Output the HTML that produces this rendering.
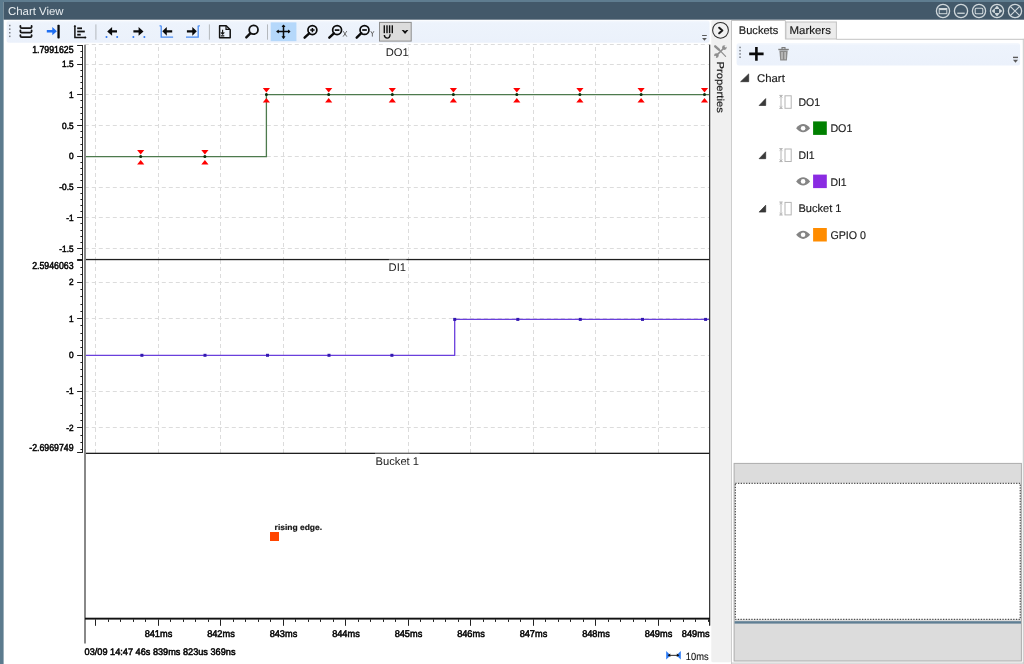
<!DOCTYPE html><html><head><meta charset="utf-8"><style>html,body{margin:0;padding:0;background:#fff;overflow:hidden}svg{display:block;will-change:transform}text{font-family:"Liberation Sans", sans-serif;text-rendering:geometricPrecision}</style></head><body>
<svg width="1024" height="664" viewBox="0 0 1024 664">
<rect x="0" y="0" width="1024" height="664" fill="#fff"/>
<rect x="0" y="0" width="1024" height="2" fill="#5f7d90"/>
<rect x="0" y="0" width="3.6" height="664" fill="#5c7b8e"/>
<defs><linearGradient id="tbg" x1="0" y1="0" x2="0" y2="1"><stop offset="0" stop-color="#f5f8fd"/><stop offset="0.12" stop-color="#edf3fc"/><stop offset="1" stop-color="#ebf1fb"/></linearGradient></defs>
<rect x="3.6" y="2" width="1020.4" height="17.7" fill="#43596a"/>
<text x="8" y="15.2" font-size="11.4" fill="#e8edf0">Chart View</text>
<circle cx="943" cy="11" r="6.6" fill="none" stroke="#cfd7db" stroke-width="1.3"/>
<circle cx="961" cy="11" r="6.6" fill="none" stroke="#cfd7db" stroke-width="1.3"/>
<circle cx="979" cy="11" r="6.6" fill="none" stroke="#cfd7db" stroke-width="1.3"/>
<circle cx="997" cy="11" r="6.6" fill="none" stroke="#cfd7db" stroke-width="1.3"/>
<circle cx="1015" cy="11" r="6.6" fill="none" stroke="#cfd7db" stroke-width="1.3"/>
<g fill="#cfd7db" stroke="#cfd7db">
<rect x="939.2" y="8.5" width="7.6" height="5.2" fill="none" stroke-width="1"/><rect x="939.2" y="8.5" width="7.6" height="1.6" stroke="none"/>
<rect x="957.3" y="12.6" width="7.4" height="1.3" stroke="none"/>
<rect x="975.2" y="8.2" width="7.6" height="5.6" rx="1" fill="none" stroke-width="1.1"/>
<path d="M997 5.6 L999.8 8.9 L994.2 8.9Z M997 16.4 L999.8 13.1 L994.2 13.1Z M991.6 11 L994.9 8.2 L994.9 13.8Z M1002.4 11 L999.1 8.2 L999.1 13.8Z" stroke="none"/>
<path d="M1010.3 6.3 L1019.7 15.7 M1019.7 6.3 L1010.3 15.7" fill="none" stroke-width="1.2"/>
</g>
<rect x="6.6" y="20.4" width="703" height="22.4" rx="2.5" fill="url(#tbg)"/>
<rect x="9" y="24.8" width="1.5" height="1.5" fill="#7a7f86"/>
<rect x="9" y="28.400000000000002" width="1.5" height="1.5" fill="#7a7f86"/>
<rect x="9" y="32.0" width="1.5" height="1.5" fill="#7a7f86"/>
<rect x="9" y="35.599999999999994" width="1.5" height="1.5" fill="#7a7f86"/>
<path d="M20.4 25.9 L20.4 26.90 Q20.4 28.1 21.8 28.1 L30.2 28.1 Q31.6 28.1 31.6 26.90 L31.6 25.9" fill="none" stroke="#151515" stroke-width="1.8" stroke-linecap="round"/>
<path d="M20.4 30.5 L20.4 31.40 Q20.4 32.6 21.8 32.6 L30.2 32.6 Q31.6 32.6 31.6 31.40 L31.6 30.5" fill="none" stroke="#151515" stroke-width="1.8" stroke-linecap="round"/>
<path d="M20.4 35.2 L20.4 36.00 Q20.4 37.2 21.8 37.2 L30.2 37.2 Q31.6 37.2 31.6 36.00 L31.6 35.2" fill="none" stroke="#151515" stroke-width="1.8" stroke-linecap="round"/>
<path d="M46.8 30 L52.3 30 L52.3 27.1 L56.9 31.2 L52.3 35.3 L52.3 32.4 L46.8 32.4Z" fill="#1f6ff2"/>
<rect x="57.4" y="24.7" width="2.3" height="13.9" rx="0.8" fill="#0a0a0a"/>
<path d="M74.9 25.6 L74.9 37.5 L86 37.5" fill="none" stroke="#151515" stroke-width="1.5"/>
<path d="M73.6 26.8 L74.9 24.9 L76.2 26.8Z M84.8 36.2 L86.7 37.5 L84.8 38.8Z" fill="#151515"/>
<rect x="77.2" y="27.4" width="4.8" height="1.8" fill="#111"/><rect x="77.2" y="30.6" width="7.6" height="1.8" fill="#111"/><rect x="77.2" y="33.8" width="3.5" height="1.8" fill="#111"/>
<rect x="95.4" y="24.4" width="1" height="15.3" fill="#b4b8bd"/>
<path d="M107.2 31.4 L112.1 26.9 L112.1 30.3 L117 30.3 L117 32.6 L112.1 32.6 L112.1 35.8Z" fill="#0a0a0a"/>
<circle cx="106.5" cy="37.1" r="1" fill="#2f78f0"/><circle cx="117.2" cy="37.1" r="1" fill="#2f78f0"/>
<path d="M143.5 31.4 L138.6 26.9 L138.6 30.3 L133.4 30.3 L133.4 32.6 L138.6 32.6 L138.6 35.8Z" fill="#0a0a0a"/>
<circle cx="133.4" cy="37.1" r="1" fill="#2f78f0"/><circle cx="144.4" cy="37.1" r="1" fill="#2f78f0"/>
<path d="M159.6 25.6 L161.2 26.2 L161.2 37.2 L173.1 37.2" fill="none" stroke="#4a8cf2" stroke-width="1.3"/>
<path d="M162.3 31.3 L166.8 27 L166.8 30.2 L172.2 30.2 L172.2 32.5 L166.8 32.5 L166.8 35.7Z" fill="#0a0a0a"/>
<path d="M199.8 25.6 L198.2 26.2 L198.2 37.2 L186 37.2" fill="none" stroke="#4a8cf2" stroke-width="1.3"/>
<path d="M196.8 31.3 L192.3 27 L192.3 30.2 L186.9 30.2 L186.9 32.5 L192.3 32.5 L192.3 35.7Z" fill="#0a0a0a"/>
<rect x="208.9" y="24.4" width="1" height="15.3" fill="#b4b8bd"/>
<path d="M219.6 25.7 L226.2 25.7 L230.2 29.7 L230.2 37.7 L219.6 37.7Z" fill="none" stroke="#111" stroke-width="1.5" stroke-linejoin="round"/>
<path d="M226 25.9 L226 29.3 L229.9 29.3" fill="none" stroke="#111" stroke-width="1.2"/>
<path d="M222.6 29.8 L222.6 33.6 M220.9 32.4 L222.6 34.3 L224.3 32.4 M220.9 35.9 L224.3 35.9" fill="none" stroke="#111" stroke-width="1.1"/>
<circle cx="253.6" cy="29.8" r="4.4" fill="none" stroke="#111" stroke-width="1.8"/>
<path d="M250.3 33.3 L246.3 37.4" stroke="#111" stroke-width="2.4" stroke-linecap="round"/>
<rect x="267" y="24.4" width="1" height="15.3" fill="#b4b8bd"/>
<rect x="270.7" y="22.35" width="25.7" height="18.8" fill="#b5d8fb"/>
<path d="M283.5 25 L283.5 38.3 M276.8 31.6 L290 31.6" stroke="#0a0a0a" stroke-width="1.5"/>
<path d="M283.5 24.4 L285.5 27 L281.5 27Z M283.5 38.9 L285.5 36.3 L281.5 36.3Z M276.2 31.6 L278.8 29.6 L278.8 33.6Z M290.6 31.6 L288 29.6 L288 33.6Z" fill="#0a0a0a"/>
<circle cx="312.4" cy="30.1" r="4.45" fill="none" stroke="#0a0a0a" stroke-width="1.7"/><path d="M309.2 33.300000000000004 L304.6 37.7" stroke="#0a0a0a" stroke-width="2.4" stroke-linecap="round"/>
<path d="M310.2 30.1 L314.6 30.1 M312.4 27.9 L312.4 32.3" stroke="#0a0a0a" stroke-width="1.5"/>
<circle cx="337.1" cy="30.1" r="4.45" fill="none" stroke="#0a0a0a" stroke-width="1.7"/><path d="M333.90000000000003 33.300000000000004 L329.3 37.7" stroke="#0a0a0a" stroke-width="2.4" stroke-linecap="round"/>
<path d="M334.8 30.1 L339.4 30.1" stroke="#0a0a0a" stroke-width="1.7"/>
<path d="M343.1 31.1 L346.8 36.6 M346.8 31.1 L343.1 36.6" stroke="#5a5a5a" stroke-width="0.9"/>
<circle cx="364.5" cy="30.0" r="4.45" fill="none" stroke="#0a0a0a" stroke-width="1.7"/><path d="M361.3 33.2 L356.7 37.7" stroke="#0a0a0a" stroke-width="2.4" stroke-linecap="round"/>
<path d="M362.2 30 L366.8 30" stroke="#0a0a0a" stroke-width="1.7"/>
<path d="M370.8 31.2 L372.35 33.8 L373.9 31.2 M372.35 33.8 L372.35 36.6" fill="none" stroke="#5a5a5a" stroke-width="0.9"/>
<rect x="379.5" y="22.4" width="31.7" height="18.7" fill="#dcdcdc" stroke="#8e8e8e" stroke-width="1"/>
<rect x="383.6" y="25.3" width="1.4" height="7.9" fill="#111"/>
<rect x="386.3" y="25.3" width="1.4" height="7.9" fill="#111"/>
<rect x="388.90000000000003" y="25.3" width="1.4" height="7.9" fill="#111"/>
<rect x="391.6" y="25.3" width="1.4" height="7.9" fill="#111"/>
<path d="M384.3 35.0 Q384.6 38.1 387.2 38.1 Q389.9 38.1 390.1 34.2" fill="none" stroke="#111" stroke-width="1.4"/>
<path d="M401.7 29.9 L403.5 29.9 L405.05 31.1 L406.6 29.9 L408.4 29.9 L405.05 33.9Z" fill="#111"/>
<rect x="702.1" y="35" width="4.7" height="1" fill="#5a5a5a"/><path d="M702.1 38.1 L706.8 38.1 L704.45 40.8Z" fill="#5a5a5a"/>
<g>
<line x1="95.5" y1="47" x2="95.5" y2="259" stroke="#dcdcdc" stroke-width="1" stroke-dasharray="4 3"/>
<line x1="95.5" y1="260" x2="95.5" y2="453" stroke="#dcdcdc" stroke-width="1" stroke-dasharray="4 3"/>
<line x1="158.5" y1="47" x2="158.5" y2="259" stroke="#dcdcdc" stroke-width="1" stroke-dasharray="4 3"/>
<line x1="158.5" y1="260" x2="158.5" y2="453" stroke="#dcdcdc" stroke-width="1" stroke-dasharray="4 3"/>
<line x1="220.5" y1="47" x2="220.5" y2="259" stroke="#dcdcdc" stroke-width="1" stroke-dasharray="4 3"/>
<line x1="220.5" y1="260" x2="220.5" y2="453" stroke="#dcdcdc" stroke-width="1" stroke-dasharray="4 3"/>
<line x1="283.5" y1="47" x2="283.5" y2="259" stroke="#dcdcdc" stroke-width="1" stroke-dasharray="4 3"/>
<line x1="283.5" y1="260" x2="283.5" y2="453" stroke="#dcdcdc" stroke-width="1" stroke-dasharray="4 3"/>
<line x1="345.5" y1="47" x2="345.5" y2="259" stroke="#dcdcdc" stroke-width="1" stroke-dasharray="4 3"/>
<line x1="345.5" y1="260" x2="345.5" y2="453" stroke="#dcdcdc" stroke-width="1" stroke-dasharray="4 3"/>
<line x1="408.5" y1="47" x2="408.5" y2="259" stroke="#dcdcdc" stroke-width="1" stroke-dasharray="4 3"/>
<line x1="408.5" y1="260" x2="408.5" y2="453" stroke="#dcdcdc" stroke-width="1" stroke-dasharray="4 3"/>
<line x1="470.5" y1="47" x2="470.5" y2="259" stroke="#dcdcdc" stroke-width="1" stroke-dasharray="4 3"/>
<line x1="470.5" y1="260" x2="470.5" y2="453" stroke="#dcdcdc" stroke-width="1" stroke-dasharray="4 3"/>
<line x1="533.5" y1="47" x2="533.5" y2="259" stroke="#dcdcdc" stroke-width="1" stroke-dasharray="4 3"/>
<line x1="533.5" y1="260" x2="533.5" y2="453" stroke="#dcdcdc" stroke-width="1" stroke-dasharray="4 3"/>
<line x1="595.5" y1="47" x2="595.5" y2="259" stroke="#dcdcdc" stroke-width="1" stroke-dasharray="4 3"/>
<line x1="595.5" y1="260" x2="595.5" y2="453" stroke="#dcdcdc" stroke-width="1" stroke-dasharray="4 3"/>
<line x1="658.5" y1="47" x2="658.5" y2="259" stroke="#dcdcdc" stroke-width="1" stroke-dasharray="4 3"/>
<line x1="658.5" y1="260" x2="658.5" y2="453" stroke="#dcdcdc" stroke-width="1" stroke-dasharray="4 3"/>
<line x1="84.8" y1="64.5" x2="709" y2="64.5" stroke="#dcdcdc" stroke-width="1" stroke-dasharray="4 3"/>
<line x1="84.8" y1="94.5" x2="709" y2="94.5" stroke="#dcdcdc" stroke-width="1" stroke-dasharray="4 3"/>
<line x1="84.8" y1="125.5" x2="709" y2="125.5" stroke="#dcdcdc" stroke-width="1" stroke-dasharray="4 3"/>
<line x1="84.8" y1="156.5" x2="709" y2="156.5" stroke="#dcdcdc" stroke-width="1" stroke-dasharray="4 3"/>
<line x1="84.8" y1="187.5" x2="709" y2="187.5" stroke="#dcdcdc" stroke-width="1" stroke-dasharray="4 3"/>
<line x1="84.8" y1="217.5" x2="709" y2="217.5" stroke="#dcdcdc" stroke-width="1" stroke-dasharray="4 3"/>
<line x1="84.8" y1="248.5" x2="709" y2="248.5" stroke="#dcdcdc" stroke-width="1" stroke-dasharray="4 3"/>
<line x1="84.8" y1="282.5" x2="709" y2="282.5" stroke="#dcdcdc" stroke-width="1" stroke-dasharray="4 3"/>
<line x1="84.8" y1="318.5" x2="709" y2="318.5" stroke="#dcdcdc" stroke-width="1" stroke-dasharray="4 3"/>
<line x1="84.8" y1="355.5" x2="709" y2="355.5" stroke="#dcdcdc" stroke-width="1" stroke-dasharray="4 3"/>
<line x1="84.8" y1="391.5" x2="709" y2="391.5" stroke="#dcdcdc" stroke-width="1" stroke-dasharray="4 3"/>
<line x1="84.8" y1="427.5" x2="709" y2="427.5" stroke="#dcdcdc" stroke-width="1" stroke-dasharray="4 3"/>
<line x1="84.8" y1="44.5" x2="709" y2="44.5" stroke="#dcdcdc" stroke-width="1" stroke-dasharray="4 3"/>
</g>
<rect x="84.1" y="44.8" width="1.8" height="598.7" fill="#7c7c7c"/>
<rect x="82" y="45" width="1" height="407.8" fill="#222"/>
<rect x="709" y="44.6" width="1.3" height="581" fill="#3a3a3a"/>
<rect x="85.9" y="258.9" width="623.5" height="1.3" fill="#1e1e1e"/>
<rect x="85.9" y="452.7" width="623.5" height="1.3" fill="#1e1e1e"/>
<rect x="85" y="617.7" width="625" height="1.9" fill="#111"/>
<rect x="80.4" y="254" width="2.40" height="1" fill="#222"/>
<rect x="77.1" y="248" width="5.70" height="1" fill="#222"/>
<rect x="80.4" y="242" width="2.40" height="1" fill="#222"/>
<rect x="80.4" y="236" width="2.40" height="1" fill="#222"/>
<rect x="80.4" y="230" width="2.40" height="1" fill="#222"/>
<rect x="80.4" y="223" width="2.40" height="1" fill="#222"/>
<rect x="77.1" y="217" width="5.70" height="1" fill="#222"/>
<rect x="80.4" y="211" width="2.40" height="1" fill="#222"/>
<rect x="80.4" y="205" width="2.40" height="1" fill="#222"/>
<rect x="80.4" y="199" width="2.40" height="1" fill="#222"/>
<rect x="80.4" y="193" width="2.40" height="1" fill="#222"/>
<rect x="77.1" y="187" width="5.70" height="1" fill="#222"/>
<rect x="80.4" y="180" width="2.40" height="1" fill="#222"/>
<rect x="80.4" y="174" width="2.40" height="1" fill="#222"/>
<rect x="80.4" y="168" width="2.40" height="1" fill="#222"/>
<rect x="80.4" y="162" width="2.40" height="1" fill="#222"/>
<rect x="77.1" y="156" width="5.70" height="1" fill="#222"/>
<rect x="80.4" y="150" width="2.40" height="1" fill="#222"/>
<rect x="80.4" y="144" width="2.40" height="1" fill="#222"/>
<rect x="80.4" y="137" width="2.40" height="1" fill="#222"/>
<rect x="80.4" y="131" width="2.40" height="1" fill="#222"/>
<rect x="77.1" y="125" width="5.70" height="1" fill="#222"/>
<rect x="80.4" y="119" width="2.40" height="1" fill="#222"/>
<rect x="80.4" y="113" width="2.40" height="1" fill="#222"/>
<rect x="80.4" y="107" width="2.40" height="1" fill="#222"/>
<rect x="80.4" y="100" width="2.40" height="1" fill="#222"/>
<rect x="77.1" y="94" width="5.70" height="1" fill="#222"/>
<rect x="80.4" y="88" width="2.40" height="1" fill="#222"/>
<rect x="80.4" y="82" width="2.40" height="1" fill="#222"/>
<rect x="80.4" y="76" width="2.40" height="1" fill="#222"/>
<rect x="80.4" y="70" width="2.40" height="1" fill="#222"/>
<rect x="77.1" y="64" width="5.70" height="1" fill="#222"/>
<rect x="80.4" y="57" width="2.40" height="1" fill="#222"/>
<rect x="80.4" y="51" width="2.40" height="1" fill="#222"/>
<rect x="77.1" y="45" width="5.70" height="1" fill="#222"/>
<rect x="77.1" y="259" width="5.70" height="1" fill="#222"/>
<rect x="80.4" y="449" width="2.40" height="1" fill="#222"/>
<rect x="80.4" y="442" width="2.40" height="1" fill="#222"/>
<rect x="80.4" y="435" width="2.40" height="1" fill="#222"/>
<rect x="77.1" y="427" width="5.70" height="1" fill="#222"/>
<rect x="80.4" y="420" width="2.40" height="1" fill="#222"/>
<rect x="80.4" y="413" width="2.40" height="1" fill="#222"/>
<rect x="80.4" y="405" width="2.40" height="1" fill="#222"/>
<rect x="80.4" y="398" width="2.40" height="1" fill="#222"/>
<rect x="77.1" y="391" width="5.70" height="1" fill="#222"/>
<rect x="80.4" y="384" width="2.40" height="1" fill="#222"/>
<rect x="80.4" y="376" width="2.40" height="1" fill="#222"/>
<rect x="80.4" y="369" width="2.40" height="1" fill="#222"/>
<rect x="80.4" y="362" width="2.40" height="1" fill="#222"/>
<rect x="77.1" y="355" width="5.70" height="1" fill="#222"/>
<rect x="80.4" y="347" width="2.40" height="1" fill="#222"/>
<rect x="80.4" y="340" width="2.40" height="1" fill="#222"/>
<rect x="80.4" y="333" width="2.40" height="1" fill="#222"/>
<rect x="80.4" y="325" width="2.40" height="1" fill="#222"/>
<rect x="77.1" y="318" width="5.70" height="1" fill="#222"/>
<rect x="80.4" y="311" width="2.40" height="1" fill="#222"/>
<rect x="80.4" y="304" width="2.40" height="1" fill="#222"/>
<rect x="80.4" y="296" width="2.40" height="1" fill="#222"/>
<rect x="80.4" y="289" width="2.40" height="1" fill="#222"/>
<rect x="77.1" y="282" width="5.70" height="1" fill="#222"/>
<rect x="80.4" y="274" width="2.40" height="1" fill="#222"/>
<rect x="80.4" y="267" width="2.40" height="1" fill="#222"/>
<rect x="77.1" y="260" width="5.70" height="1" fill="#222"/>
<rect x="77.1" y="452" width="5.70" height="1" fill="#222"/>
<rect x="95" y="619.3" width="1" height="6.5" fill="#222"/>
<rect x="108" y="619.3" width="1" height="2.6" fill="#222"/>
<rect x="120" y="619.3" width="1" height="2.6" fill="#222"/>
<rect x="133" y="619.3" width="1" height="2.6" fill="#222"/>
<rect x="145" y="619.3" width="1" height="2.6" fill="#222"/>
<rect x="158" y="619.3" width="1" height="6.5" fill="#222"/>
<rect x="170" y="619.3" width="1" height="2.6" fill="#222"/>
<rect x="183" y="619.3" width="1" height="2.6" fill="#222"/>
<rect x="195" y="619.3" width="1" height="2.6" fill="#222"/>
<rect x="208" y="619.3" width="1" height="2.6" fill="#222"/>
<rect x="220" y="619.3" width="1" height="6.5" fill="#222"/>
<rect x="233" y="619.3" width="1" height="2.6" fill="#222"/>
<rect x="245" y="619.3" width="1" height="2.6" fill="#222"/>
<rect x="258" y="619.3" width="1" height="2.6" fill="#222"/>
<rect x="270" y="619.3" width="1" height="2.6" fill="#222"/>
<rect x="283" y="619.3" width="1" height="6.5" fill="#222"/>
<rect x="295" y="619.3" width="1" height="2.6" fill="#222"/>
<rect x="308" y="619.3" width="1" height="2.6" fill="#222"/>
<rect x="320" y="619.3" width="1" height="2.6" fill="#222"/>
<rect x="333" y="619.3" width="1" height="2.6" fill="#222"/>
<rect x="345" y="619.3" width="1" height="6.5" fill="#222"/>
<rect x="358" y="619.3" width="1" height="2.6" fill="#222"/>
<rect x="370" y="619.3" width="1" height="2.6" fill="#222"/>
<rect x="383" y="619.3" width="1" height="2.6" fill="#222"/>
<rect x="395" y="619.3" width="1" height="2.6" fill="#222"/>
<rect x="408" y="619.3" width="1" height="6.5" fill="#222"/>
<rect x="420" y="619.3" width="1" height="2.6" fill="#222"/>
<rect x="433" y="619.3" width="1" height="2.6" fill="#222"/>
<rect x="445" y="619.3" width="1" height="2.6" fill="#222"/>
<rect x="458" y="619.3" width="1" height="2.6" fill="#222"/>
<rect x="470" y="619.3" width="1" height="6.5" fill="#222"/>
<rect x="483" y="619.3" width="1" height="2.6" fill="#222"/>
<rect x="495" y="619.3" width="1" height="2.6" fill="#222"/>
<rect x="508" y="619.3" width="1" height="2.6" fill="#222"/>
<rect x="520" y="619.3" width="1" height="2.6" fill="#222"/>
<rect x="533" y="619.3" width="1" height="6.5" fill="#222"/>
<rect x="545" y="619.3" width="1" height="2.6" fill="#222"/>
<rect x="558" y="619.3" width="1" height="2.6" fill="#222"/>
<rect x="570" y="619.3" width="1" height="2.6" fill="#222"/>
<rect x="583" y="619.3" width="1" height="2.6" fill="#222"/>
<rect x="595" y="619.3" width="1" height="6.5" fill="#222"/>
<rect x="608" y="619.3" width="1" height="2.6" fill="#222"/>
<rect x="620" y="619.3" width="1" height="2.6" fill="#222"/>
<rect x="633" y="619.3" width="1" height="2.6" fill="#222"/>
<rect x="645" y="619.3" width="1" height="2.6" fill="#222"/>
<rect x="658" y="619.3" width="1" height="6.5" fill="#222"/>
<rect x="670" y="619.3" width="1" height="2.6" fill="#222"/>
<rect x="683" y="619.3" width="1" height="2.6" fill="#222"/>
<rect x="695" y="619.3" width="1" height="2.6" fill="#222"/>
<rect x="708" y="619.3" width="1" height="2.6" fill="#222"/>
<rect x="709" y="619" width="1" height="6.5" fill="#222"/>
<g transform="translate(73.6,53.40) scale(0.86 1)"><text x="0" y="0" font-size="10.2" fill="#000" stroke="#000" stroke-width="0.5" text-anchor="end">1.7991625</text></g>
<g transform="translate(73.6,67.00) scale(0.91 1)"><text x="0" y="0" font-size="9.1" fill="#000" stroke="#000" stroke-width="0.5" text-anchor="end">1.5</text></g>
<g transform="translate(73.6,97.75) scale(0.91 1)"><text x="0" y="0" font-size="9.1" fill="#000" stroke="#000" stroke-width="0.5" text-anchor="end">1</text></g>
<g transform="translate(73.6,128.50) scale(0.91 1)"><text x="0" y="0" font-size="9.1" fill="#000" stroke="#000" stroke-width="0.5" text-anchor="end">0.5</text></g>
<g transform="translate(73.6,159.25) scale(0.91 1)"><text x="0" y="0" font-size="9.1" fill="#000" stroke="#000" stroke-width="0.5" text-anchor="end">0</text></g>
<g transform="translate(73.6,190.00) scale(0.91 1)"><text x="0" y="0" font-size="9.1" fill="#000" stroke="#000" stroke-width="0.5" text-anchor="end">-0.5</text></g>
<g transform="translate(73.6,220.75) scale(0.91 1)"><text x="0" y="0" font-size="9.1" fill="#000" stroke="#000" stroke-width="0.5" text-anchor="end">-1</text></g>
<g transform="translate(73.6,251.50) scale(0.91 1)"><text x="0" y="0" font-size="9.1" fill="#000" stroke="#000" stroke-width="0.5" text-anchor="end">-1.5</text></g>
<g transform="translate(73.6,269.00) scale(0.86 1)"><text x="0" y="0" font-size="10.2" fill="#000" stroke="#000" stroke-width="0.5" text-anchor="end">2.5946063</text></g>
<g transform="translate(73.6,285.15) scale(0.91 1)"><text x="0" y="0" font-size="9.1" fill="#000" stroke="#000" stroke-width="0.5" text-anchor="end">2</text></g>
<g transform="translate(73.6,321.55) scale(0.91 1)"><text x="0" y="0" font-size="9.1" fill="#000" stroke="#000" stroke-width="0.5" text-anchor="end">1</text></g>
<g transform="translate(73.6,357.95) scale(0.91 1)"><text x="0" y="0" font-size="9.1" fill="#000" stroke="#000" stroke-width="0.5" text-anchor="end">0</text></g>
<g transform="translate(73.6,394.35) scale(0.91 1)"><text x="0" y="0" font-size="9.1" fill="#000" stroke="#000" stroke-width="0.5" text-anchor="end">-1</text></g>
<g transform="translate(73.6,430.75) scale(0.91 1)"><text x="0" y="0" font-size="9.1" fill="#000" stroke="#000" stroke-width="0.5" text-anchor="end">-2</text></g>
<g transform="translate(73.6,451.10) scale(0.86 1)"><text x="0" y="0" font-size="10.2" fill="#000" stroke="#000" stroke-width="0.5" text-anchor="end">-2.6969749</text></g>
<g transform="translate(158.45,636.9) scale(0.94 1)"><text x="0" y="0" font-size="9.8" fill="#000" stroke="#000" stroke-width="0.5" text-anchor="middle">841ms</text></g>
<g transform="translate(220.95,636.9) scale(0.94 1)"><text x="0" y="0" font-size="9.8" fill="#000" stroke="#000" stroke-width="0.5" text-anchor="middle">842ms</text></g>
<g transform="translate(283.45,636.9) scale(0.94 1)"><text x="0" y="0" font-size="9.8" fill="#000" stroke="#000" stroke-width="0.5" text-anchor="middle">843ms</text></g>
<g transform="translate(345.95,636.9) scale(0.94 1)"><text x="0" y="0" font-size="9.8" fill="#000" stroke="#000" stroke-width="0.5" text-anchor="middle">844ms</text></g>
<g transform="translate(408.45,636.9) scale(0.94 1)"><text x="0" y="0" font-size="9.8" fill="#000" stroke="#000" stroke-width="0.5" text-anchor="middle">845ms</text></g>
<g transform="translate(470.95,636.9) scale(0.94 1)"><text x="0" y="0" font-size="9.8" fill="#000" stroke="#000" stroke-width="0.5" text-anchor="middle">846ms</text></g>
<g transform="translate(533.45,636.9) scale(0.94 1)"><text x="0" y="0" font-size="9.8" fill="#000" stroke="#000" stroke-width="0.5" text-anchor="middle">847ms</text></g>
<g transform="translate(595.95,636.9) scale(0.94 1)"><text x="0" y="0" font-size="9.8" fill="#000" stroke="#000" stroke-width="0.5" text-anchor="middle">848ms</text></g>
<g transform="translate(658.45,636.9) scale(0.94 1)"><text x="0" y="0" font-size="9.8" fill="#000" stroke="#000" stroke-width="0.5" text-anchor="middle">849ms</text></g>
<g transform="translate(709.50,636.9) scale(0.94 1)"><text x="0" y="0" font-size="9.8" fill="#000" stroke="#000" stroke-width="0.5" text-anchor="end">849ms</text></g>
<g transform="translate(84.6,655.1) scale(0.965 1)"><text x="0" y="0" font-size="9.5" fill="#000" stroke="#000" stroke-width="0.5">03/09 14:47 46s 839ms 823us 369ns</text></g>
<path d="M666.2 651.1 L669.4 654.2 L669.4 656.5 L666.2 659.6Z M680.8 651.1 L677.6 654.2 L677.6 656.5 L680.8 659.6Z" fill="#2a7af5"/>
<path d="M668.5 655.35 L678.6 655.35" stroke="#111" stroke-width="0.9"/>
<path d="M667.8 655.35 L670.3 653.6 L670.3 657.1Z M679.3 655.35 L676.8 653.6 L676.8 657.1Z" fill="#111"/>
<text x="685.8" y="659.6" font-size="10.4" fill="#111" stroke="#111" stroke-width="0.12" textLength="22.8" lengthAdjust="spacingAndGlyphs">10ms</text>
<rect x="385.8" y="44" width="22.6" height="17" fill="#fff" fill-opacity="0.7"/>
<text x="397.3" y="55.8" font-size="11.2" fill="#222" text-anchor="middle">DO1</text>
<rect x="388.9" y="258.6" width="17.6" height="17" fill="#fff" fill-opacity="0.3"/>
<text x="397.3" y="270.8" font-size="11.2" fill="#222" text-anchor="middle">DI1</text>
<rect x="375" y="452.5" width="44.7" height="17" fill="#fff" fill-opacity="0.3"/>
<text x="397.3" y="464.8" font-size="11.2" fill="#222" text-anchor="middle">Bucket 1</text>
<path d="M86 156.6 L266.4 156.6 L266.4 94.6 L709 94.6" fill="none" stroke="#4d7a4d" stroke-width="1.3"/>
<path d="M137.10 150.10 L144.30 150.10 L140.70 154.50Z M137.10 164.60 L144.30 164.60 L140.70 160.10Z" fill="#ff0000"/>
<circle cx="140.7" cy="156.6" r="1.5" fill="#0b2e0b"/>
<path d="M201.30 150.10 L208.50 150.10 L204.90 154.50Z M201.30 164.60 L208.50 164.60 L204.90 160.10Z" fill="#ff0000"/>
<circle cx="204.9" cy="156.6" r="1.5" fill="#0b2e0b"/>
<path d="M262.80 88.10 L270.00 88.10 L266.40 92.50Z M262.80 102.60 L270.00 102.60 L266.40 98.10Z" fill="#ff0000"/>
<circle cx="266.4" cy="94.6" r="1.5" fill="#0b2e0b"/>
<path d="M325.10 88.10 L332.30 88.10 L328.70 92.50Z M325.10 102.60 L332.30 102.60 L328.70 98.10Z" fill="#ff0000"/>
<circle cx="328.7" cy="94.6" r="1.5" fill="#0b2e0b"/>
<path d="M388.70 88.10 L395.90 88.10 L392.30 92.50Z M388.70 102.60 L395.90 102.60 L392.30 98.10Z" fill="#ff0000"/>
<circle cx="392.3" cy="94.6" r="1.5" fill="#0b2e0b"/>
<path d="M449.80 88.10 L457.00 88.10 L453.40 92.50Z M449.80 102.60 L457.00 102.60 L453.40 98.10Z" fill="#ff0000"/>
<circle cx="453.4" cy="94.6" r="1.5" fill="#0b2e0b"/>
<path d="M513.20 88.10 L520.40 88.10 L516.80 92.50Z M513.20 102.60 L520.40 102.60 L516.80 98.10Z" fill="#ff0000"/>
<circle cx="516.8" cy="94.6" r="1.5" fill="#0b2e0b"/>
<path d="M576.30 88.10 L583.50 88.10 L579.90 92.50Z M576.30 102.60 L583.50 102.60 L579.90 98.10Z" fill="#ff0000"/>
<circle cx="579.9" cy="94.6" r="1.5" fill="#0b2e0b"/>
<path d="M637.50 88.10 L644.70 88.10 L641.10 92.50Z M637.50 102.60 L644.70 102.60 L641.10 98.10Z" fill="#ff0000"/>
<circle cx="641.1" cy="94.6" r="1.5" fill="#0b2e0b"/>
<path d="M700.90 88.10 L708.10 88.10 L704.50 92.50Z M700.90 102.60 L708.10 102.60 L704.50 98.10Z" fill="#ff0000"/>
<circle cx="704.5" cy="94.6" r="1.5" fill="#0b2e0b"/>
<path d="M86 355.3 L454.7 355.3 L454.7 319.4 L709 319.4" fill="none" stroke="#6a3fdc" stroke-width="1.3"/>
<rect x="140.40" y="353.80" width="3" height="3" fill="#3218b0"/>
<rect x="203.50" y="353.80" width="3" height="3" fill="#3218b0"/>
<rect x="266.00" y="353.80" width="3" height="3" fill="#3218b0"/>
<rect x="327.50" y="353.80" width="3" height="3" fill="#3218b0"/>
<rect x="390.40" y="353.80" width="3" height="3" fill="#3218b0"/>
<rect x="453.20" y="317.90" width="3" height="3" fill="#3218b0"/>
<rect x="516.30" y="317.90" width="3" height="3" fill="#3218b0"/>
<rect x="578.80" y="317.90" width="3" height="3" fill="#3218b0"/>
<rect x="641.00" y="317.90" width="3" height="3" fill="#3218b0"/>
<rect x="704.10" y="317.90" width="3" height="3" fill="#3218b0"/>
<rect x="270" y="532" width="9" height="9" fill="#ff4500"/>
<text x="274.6" y="529.6" font-size="8" font-weight="bold" fill="#151515" stroke="#151515" stroke-width="0.2" textLength="47.4" lengthAdjust="spacingAndGlyphs">rising edge.</text>
<rect x="711.3" y="20" width="19.7" height="642.3" rx="1.5" fill="#f0f0f0"/>
<rect x="731" y="20" width="1" height="644" fill="#cdcdcd"/>
<rect x="732" y="20" width="292" height="644" fill="#fff"/>
<rect x="836.4" y="38.8" width="187.6" height="1" fill="#c4c4c4"/>
<rect x="1022.8" y="38.8" width="1" height="625" fill="#c8c8c8"/>
<path d="M731.5 40 L731.5 20.5 L785.4 20.5 L785.4 39.3" fill="none" stroke="#c4c4c4" stroke-width="1"/>
<rect x="785.9" y="22" width="50.5" height="17" fill="#ececec" stroke="#c2c2c2" stroke-width="1"/>
<text x="738.8" y="34" font-size="11.2" fill="#1a1a1a" stroke="#1a1a1a" stroke-width="0.15" textLength="39.4" lengthAdjust="spacingAndGlyphs">Buckets</text>
<text x="789.5" y="34" font-size="11.2" fill="#1a1a1a" stroke="#1a1a1a" stroke-width="0.15" textLength="41.4" lengthAdjust="spacingAndGlyphs">Markers</text>
<rect x="736.6" y="42.9" width="283.5" height="22.5" rx="2.5" fill="url(#tbg)"/>
<rect x="739.3" y="46.699999999999996" width="1.5" height="1.5" fill="#7a7f86"/>
<rect x="739.3" y="49.9" width="1.5" height="1.5" fill="#7a7f86"/>
<rect x="739.3" y="53.199999999999996" width="1.5" height="1.5" fill="#7a7f86"/>
<rect x="739.3" y="56.5" width="1.5" height="1.5" fill="#7a7f86"/>
<path d="M749.2 53.9 L763.6 53.9 M756.4 47 L756.4 60.7" stroke="#0a0a0a" stroke-width="2.6"/>
<path d="M778.3 49.5 L788.8 49.5" stroke="#7d7d7d" stroke-width="1.4"/>
<path d="M782 49 L782 47.6 L785 47.6 L785 49" fill="none" stroke="#7d7d7d" stroke-width="1.1"/>
<path d="M779.4 50.5 L780.2 60.6 L786.9 60.6 L787.7 50.5Z" fill="#8a8a8a"/>
<rect x="781.4" y="52" width="1.2" height="7.3" fill="#d0d0d0"/><rect x="784.5" y="52" width="1.2" height="7.3" fill="#d0d0d0"/>
<rect x="1013" y="56.7" width="5" height="1.4" fill="#5a5a5a"/><path d="M1013 59.8 L1018 59.8 L1015.5 62.8Z" fill="#5a5a5a"/>
<path d="M748.7 73.9 L748.7 81.7 L740.6 81.7Z" fill="#3a3a3a" stroke="#222" stroke-width="0.6" stroke-linejoin="round"/>
<text x="757.1" y="81.9" font-size="11.2" fill="#1a1a1a" stroke="#1a1a1a" stroke-width="0.15" textLength="27.7" lengthAdjust="spacingAndGlyphs">Chart</text>
<path d="M765.7 98.6 L765.7 105.5 L759.1 105.5Z" fill="#3a3a3a" stroke="#222" stroke-width="0.6" stroke-linejoin="round"/>
<g fill="none" stroke="#b4b4b4" stroke-width="1"><path d="M781 95.39999999999999 L781 108.39999999999999 M779.3 95.39999999999999 L782.7 95.39999999999999 M779.3 108.39999999999999 L782.7 108.39999999999999"/><path d="M779.6 97.39999999999999 L781 96.1 L782.4 97.39999999999999 M779.6 106.39999999999999 L781 107.69999999999999 L782.4 106.39999999999999"/><rect x="785" y="95.8" width="6.2" height="12.5"/></g>
<text x="798.4" y="105.8" font-size="11.2" fill="#1a1a1a" stroke="#1a1a1a" stroke-width="0.15" textLength="21.7" lengthAdjust="spacingAndGlyphs">DO1</text>
<path d="M796.1 128.2 Q803.1 119.99999999999999 810.1 128.2 Q803.1 136.39999999999998 796.1 128.2Z" fill="#848484"/><circle cx="803.1" cy="128.2" r="2.3" fill="#fff"/>
<rect x="813.1" y="121.40" width="13.7" height="13.5" fill="#008000"/>
<text x="830.4" y="132.40" font-size="11.2" fill="#1a1a1a" stroke="#1a1a1a" stroke-width="0.15" textLength="22.0" lengthAdjust="spacingAndGlyphs">DO1</text>
<path d="M765.7 151.79999999999998 L765.7 158.7 L759.1 158.7Z" fill="#3a3a3a" stroke="#222" stroke-width="0.6" stroke-linejoin="round"/>
<g fill="none" stroke="#b4b4b4" stroke-width="1"><path d="M781 148.6 L781 161.6 M779.3 148.6 L782.7 148.6 M779.3 161.6 L782.7 161.6"/><path d="M779.6 150.6 L781 149.29999999999998 L782.4 150.6 M779.6 159.6 L781 160.9 L782.4 159.6"/><rect x="785" y="149.0" width="6.2" height="12.5"/></g>
<text x="798.4" y="159.0" font-size="11.2" fill="#1a1a1a" stroke="#1a1a1a" stroke-width="0.15" textLength="16.3" lengthAdjust="spacingAndGlyphs">DI1</text>
<path d="M796.1 181.4 Q803.1 173.20000000000002 810.1 181.4 Q803.1 189.6 796.1 181.4Z" fill="#848484"/><circle cx="803.1" cy="181.4" r="2.3" fill="#fff"/>
<rect x="813.1" y="174.60" width="13.7" height="13.5" fill="#8a2be2"/>
<text x="830.4" y="185.60" font-size="11.2" fill="#1a1a1a" stroke="#1a1a1a" stroke-width="0.15" textLength="16.3" lengthAdjust="spacingAndGlyphs">DI1</text>
<path d="M765.7 205.2 L765.7 212.1 L759.1 212.1Z" fill="#3a3a3a" stroke="#222" stroke-width="0.6" stroke-linejoin="round"/>
<g fill="none" stroke="#b4b4b4" stroke-width="1"><path d="M781 202.0 L781 215.0 M779.3 202.0 L782.7 202.0 M779.3 215.0 L782.7 215.0"/><path d="M779.6 204.0 L781 202.7 L782.4 204.0 M779.6 213.0 L781 214.3 L782.4 213.0"/><rect x="785" y="202.4" width="6.2" height="12.5"/></g>
<text x="798.4" y="212.4" font-size="11.2" fill="#1a1a1a" stroke="#1a1a1a" stroke-width="0.15" textLength="43.1" lengthAdjust="spacingAndGlyphs">Bucket 1</text>
<path d="M796.1 234.8 Q803.1 226.60000000000002 810.1 234.8 Q803.1 243.0 796.1 234.8Z" fill="#848484"/><circle cx="803.1" cy="234.8" r="2.3" fill="#fff"/>
<rect x="813.1" y="228.00" width="13.7" height="13.5" fill="#ff8c00"/>
<text x="830.4" y="239.00" font-size="11.2" fill="#1a1a1a" stroke="#1a1a1a" stroke-width="0.15" textLength="35.6" lengthAdjust="spacingAndGlyphs">GPIO 0</text>
<rect x="734.1" y="463.4" width="287.3" height="197.6" fill="#dcdcdc" stroke="#acacac" stroke-width="1"/>
<rect x="735.3" y="483.3" width="284.9" height="136" fill="#fff"/>
<rect x="735.3" y="483.3" width="284.9" height="136" fill="none" stroke="#2a2a2a" stroke-width="1" stroke-dasharray="1.3 1.4"/>
<rect x="734.6" y="621.2" width="286.4" height="2.4" fill="#5f7f94"/>
<circle cx="720.5" cy="30.3" r="7.9" fill="none" stroke="#2e2e2e" stroke-width="1.05"/>
<path d="M719.2 27.8 L722.3 30.5 L719.2 33.2" fill="none" stroke="#1a1a1a" stroke-width="2.1" stroke-linecap="round" stroke-linejoin="round"/>
<path d="M715.2 46.3 L718.9 49.6" stroke="#8e8e8e" stroke-width="2.4" stroke-linecap="round"/>
<path d="M718.6 49.2 L725.6 56.3" stroke="#8e8e8e" stroke-width="1.2" stroke-linecap="round"/>
<path d="M716.6 55.4 L724.2 47.8" stroke="#8e8e8e" stroke-width="1.6"/>
<circle cx="724.4" cy="47.6" r="2.3" fill="#8e8e8e"/><circle cx="725.7" cy="46.3" r="1.15" fill="#f0f0f0"/>
<circle cx="716.4" cy="55.6" r="2.3" fill="#8e8e8e"/><circle cx="715.1" cy="56.9" r="1.15" fill="#f0f0f0"/>
<g transform="translate(716.8,61.6) rotate(90)"><text x="0" y="0" font-size="10" fill="#1a1a1a" stroke="#1a1a1a" stroke-width="0.2" textLength="51.2" lengthAdjust="spacingAndGlyphs">Properties</text></g>
<rect x="731" y="662.6" width="293" height="1" fill="#c4c4c4"/>
</svg></body></html>
